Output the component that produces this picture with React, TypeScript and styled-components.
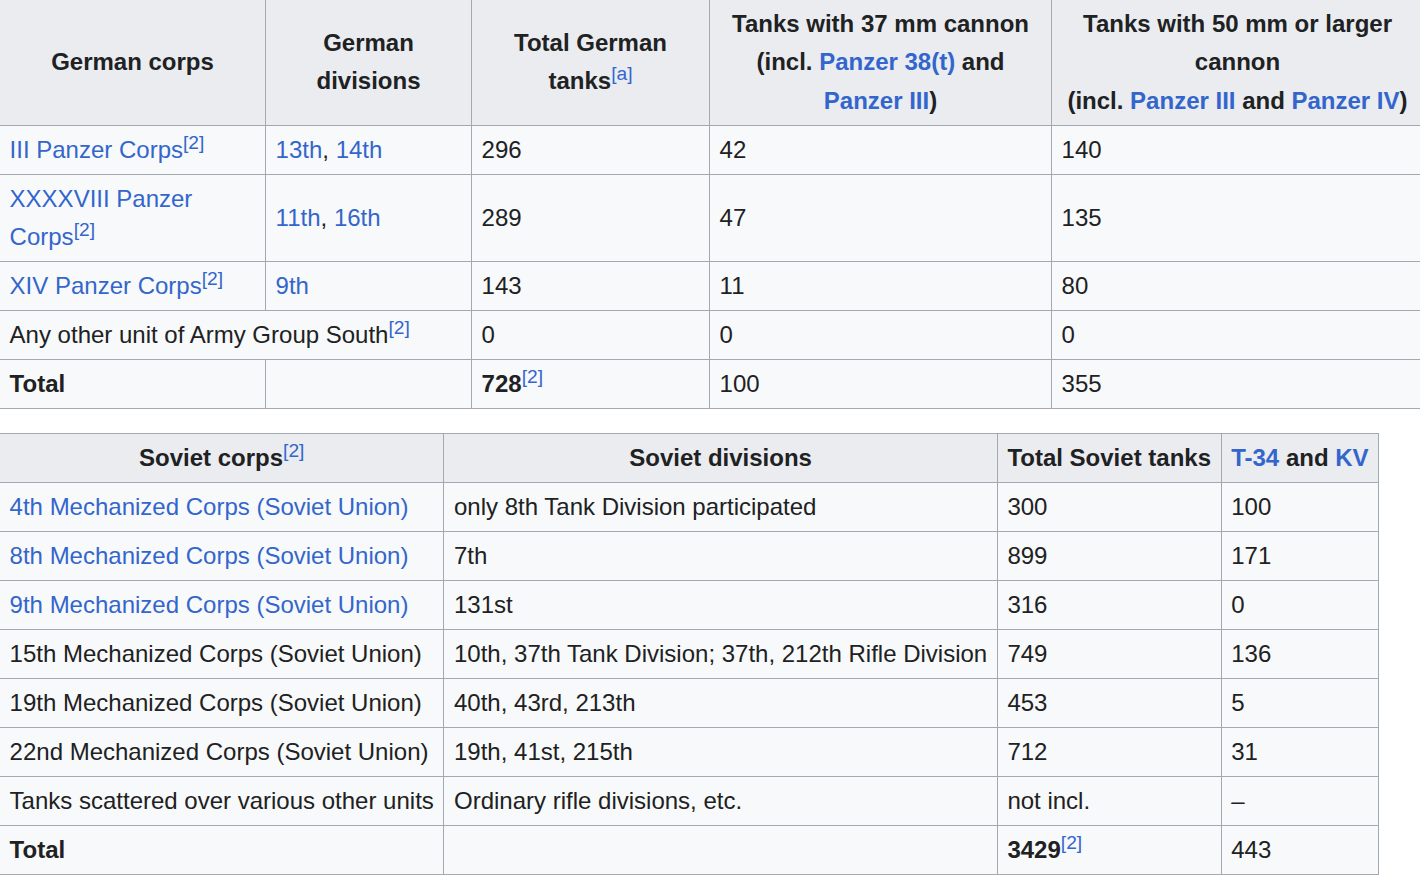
import React from "react";
import styled, { createGlobalStyle } from "styled-components";

const Global = createGlobalStyle`
  html, body {
    margin: 0;
    padding: 0;
    background: #ffffff;
    overflow: hidden;
  }
  body {
    font-family: "Liberation Sans", Arial, sans-serif;
    color: #202122;
    font-size: 24px;
  }
`;

const Page = styled.div`
  display: flex;
  flex-direction: column;
  align-items: flex-start;
  gap: 24px;
  margin: -1px 0 0 -1px;
  width: 1430px;
`;

const Table = styled.table<{ $width?: number }>`
  border-collapse: collapse;
  table-layout: ${(p) => (p.$width ? "fixed" : "auto")};
  width: ${(p) => (p.$width ? `${p.$width}px` : "auto")};
  white-space: ${(p) => (p.$width ? "normal" : "nowrap")};
  background: #f8f9fa;
  color: #202122;
  border: 1px solid #a2a9b1;
  font-size: 24px;
  line-height: 1.6;
`;

const Head = styled.th`
  background: #eaecf0;
  border: 1px solid #a2a9b1;
  padding: 4.8px 9.6px;
  font-weight: bold;
  text-align: center;
  vertical-align: middle;
`;

const Cell = styled.td<{ $bold?: boolean }>`
  border: 1px solid #a2a9b1;
  padding: 4.8px 9.6px;
  text-align: left;
  vertical-align: middle;
  font-weight: ${(p) => (p.$bold ? "bold" : "normal")};
`;

const Link = styled.a`
  color: #3366cc;
  text-decoration: none;
`;

const Ref = styled.sup`
  font-size: 80%;
  line-height: 1;
  vertical-align: super;
  font-weight: normal;
  white-space: nowrap;
  a {
    color: #3366cc;
    text-decoration: none;
  }
`;

const Note = ({ n }: { n: string }) => (
  <Ref>
    <a href="#">[{n}]</a>
  </Ref>
);

type Row = [React.ReactNode, React.ReactNode, string, string, string];

const germanRows: Row[] = [
  [
    <>
      <Link href="#">III Panzer Corps</Link>
      <Note n="2" />
    </>,
    <>
      <Link href="#">13th</Link>, <Link href="#">14th</Link>
    </>,
    "296",
    "42",
    "140",
  ],
  [
    <>
      <Link href="#">XXXXVIII Panzer Corps</Link>
      <Note n="2" />
    </>,
    <>
      <Link href="#">11th</Link>, <Link href="#">16th</Link>
    </>,
    "289",
    "47",
    "135",
  ],
  [
    <>
      <Link href="#">XIV Panzer Corps</Link>
      <Note n="2" />
    </>,
    <Link href="#">9th</Link>,
    "143",
    "11",
    "80",
  ],
];

type SRow = [React.ReactNode, string, string, string];

const sovietRows: SRow[] = [
  [<Link href="#">4th Mechanized Corps (Soviet Union)</Link>, "only 8th Tank Division participated", "300", "100"],
  [<Link href="#">8th Mechanized Corps (Soviet Union)</Link>, "7th", "899", "171"],
  [<Link href="#">9th Mechanized Corps (Soviet Union)</Link>, "131st", "316", "0"],
  ["15th Mechanized Corps (Soviet Union)", "10th, 37th Tank Division; 37th, 212th Rifle Division", "749", "136"],
  ["19th Mechanized Corps (Soviet Union)", "40th, 43rd, 213th", "453", "5"],
  ["22nd Mechanized Corps (Soviet Union)", "19th, 41st, 215th", "712", "31"],
  ["Tanks scattered over various other units", "Ordinary rifle divisions, etc.", "not incl.", "–"],
];

export default function App() {
  return (
    <>
      <Global />
      <Page>
        <Table $width={1424}>
          <colgroup>
            <col style={{ width: 266 }} />
            <col style={{ width: 206 }} />
            <col style={{ width: 238 }} />
            <col style={{ width: 342 }} />
            <col style={{ width: 372 }} />
          </colgroup>
          <thead>
            <tr>
              <Head>German corps</Head>
              <Head>German divisions</Head>
              <Head>
                Total German tanks
                <Note n="a" />
              </Head>
              <Head>
                Tanks with 37 mm cannon (incl. <Link href="#">Panzer 38(t)</Link> and{" "}
                <Link href="#">Panzer III</Link>)
              </Head>
              <Head>
                Tanks with 50 mm or larger cannon
                <br />
                (incl. <Link href="#">Panzer III</Link> and <Link href="#">Panzer IV</Link>)
              </Head>
            </tr>
          </thead>
          <tbody>
            {germanRows.map((r, i) => (
              <tr key={i}>
                {r.map((c, j) => (
                  <Cell key={j}>{c}</Cell>
                ))}
              </tr>
            ))}
            <tr>
              <Cell colSpan={2}>
                Any other unit of Army Group South
                <Note n="2" />
              </Cell>
              <Cell>0</Cell>
              <Cell>0</Cell>
              <Cell>0</Cell>
            </tr>
            <tr>
              <Cell $bold>Total</Cell>
              <Cell />
              <Cell>
                <b>728</b>
                <Note n="2" />
              </Cell>
              <Cell>100</Cell>
              <Cell>355</Cell>
            </tr>
          </tbody>
        </Table>

        <Table>
          <thead>
            <tr>
              <Head>
                Soviet corps
                <Note n="2" />
              </Head>
              <Head>Soviet divisions</Head>
              <Head>Total Soviet tanks</Head>
              <Head>
                <Link href="#">T-34</Link> and <Link href="#">KV</Link>
              </Head>
            </tr>
          </thead>
          <tbody>
            {sovietRows.map((r, i) => (
              <tr key={i}>
                {r.map((c, j) => (
                  <Cell key={j}>{c}</Cell>
                ))}
              </tr>
            ))}
            <tr>
              <Cell $bold>Total</Cell>
              <Cell />
              <Cell>
                <b>3429</b>
                <Note n="2" />
              </Cell>
              <Cell>443</Cell>
            </tr>
          </tbody>
        </Table>
      </Page>
    </>
  );
}
